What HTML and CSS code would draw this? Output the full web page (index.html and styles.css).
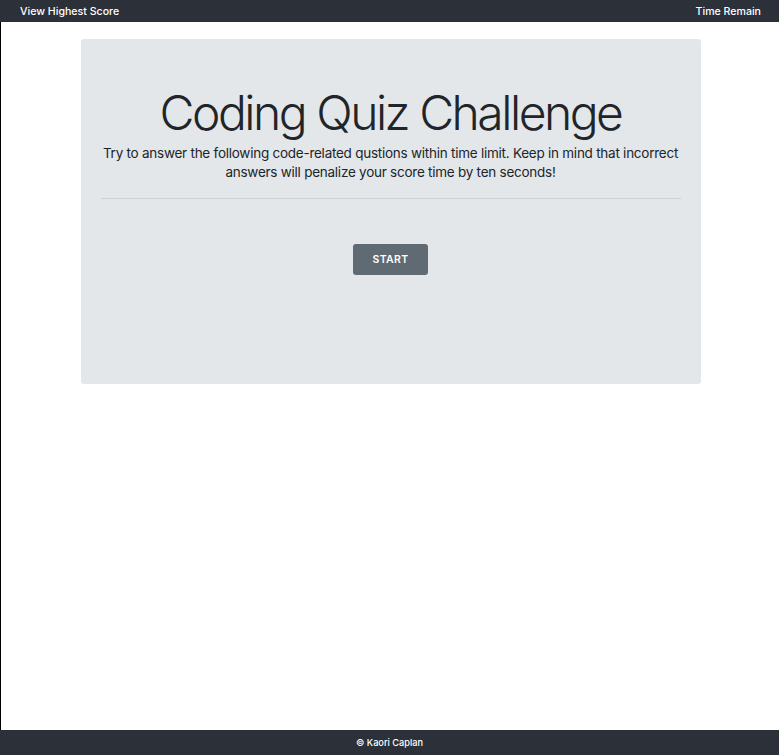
FILE: index.html
```html
<!DOCTYPE html>
<html>

<head>
    <title>Coding Quiz</title>
    <link rel="stylesheet" href="styles.css">
</head>

<body>
    <!-- Top navigation -->
    <nav class="topbar">
        <a class="topbar-link" href="#">View Highest Score</a>
        <span class="topbar-timer">Time Remain</span>
    </nav>

    <main class="page">
        <div class="jumbotron">
            <h1 class="quiz-title">Coding Quiz Challenge</h1>
            <p class="quiz-lead">Try to answer the following code-related qustions within time limit. Keep in mind that incorrect answers will penalize your score time by ten seconds!</p>
            <hr class="divider">
            <button class="btn-start">START</button>
        </div>
    </main>

    <footer class="footer">
        &copy; Kaori Caplan
    </footer>
</body>

</html>
```

FILE: styles.css
```css
html, body {
    height: 100%;
}

body {
    margin: 0;
    padding: 0;
    display: flex;
    flex-direction: column;
    font-family: Inter, "Helvetica Neue", Arial, sans-serif;
    color: #212529;
    background-color: #ffffff;
}

/* Navigation bar */
.topbar {
    display: flex;
    justify-content: space-between;
    align-items: center;
    height: 22px;
    padding: 0 18px 0 20px;
    background-color: #2c3039;
    font-size: 10.6px;
    font-weight: 500;
}

.topbar-link,
.topbar-timer {
    color: #ffffff;
    text-decoration: none;
}

.page {
    flex: 1;
    border-left: 1px solid #000;
    padding: 17px 0 0 1px;
}

/* Main card */
.jumbotron {
    width: 620px;
    margin: 0 auto;
    box-sizing: border-box;
    padding: 43px 20px 109px;
    background-color: #e3e7ea;
    border-radius: 3px;
    text-align: center;
}

.quiz-title {
    margin: 0;
    font-size: 48px;
    font-weight: 300;
    letter-spacing: -2.5px;
    line-height: 62px;
}

.quiz-lead {
    margin: 0;
    font-size: 13.5px;
    letter-spacing: -0.25px;
    line-height: 19px;
}

.divider {
    margin: 16px 0 0;
    border: 0;
    border-top: 1px solid #cdd1d4;
}

.btn-start {
    margin-top: 45px;
    width: 75px;
    height: 31px;
    background-color: #5f6a72;
    color: #ffffff;
    border: none;
    border-radius: 3px;
    font-family: inherit;
    font-size: 10.5px;
    font-weight: 600;
    letter-spacing: 0.3px;
    cursor: pointer;
}

/* Footer */
.footer {
    height: 25px;
    line-height: 26px;
    background-color: #2c3039;
    color: #ffffff;
    text-align: center;
    font-size: 9.2px;
    font-weight: 500;
}
```
